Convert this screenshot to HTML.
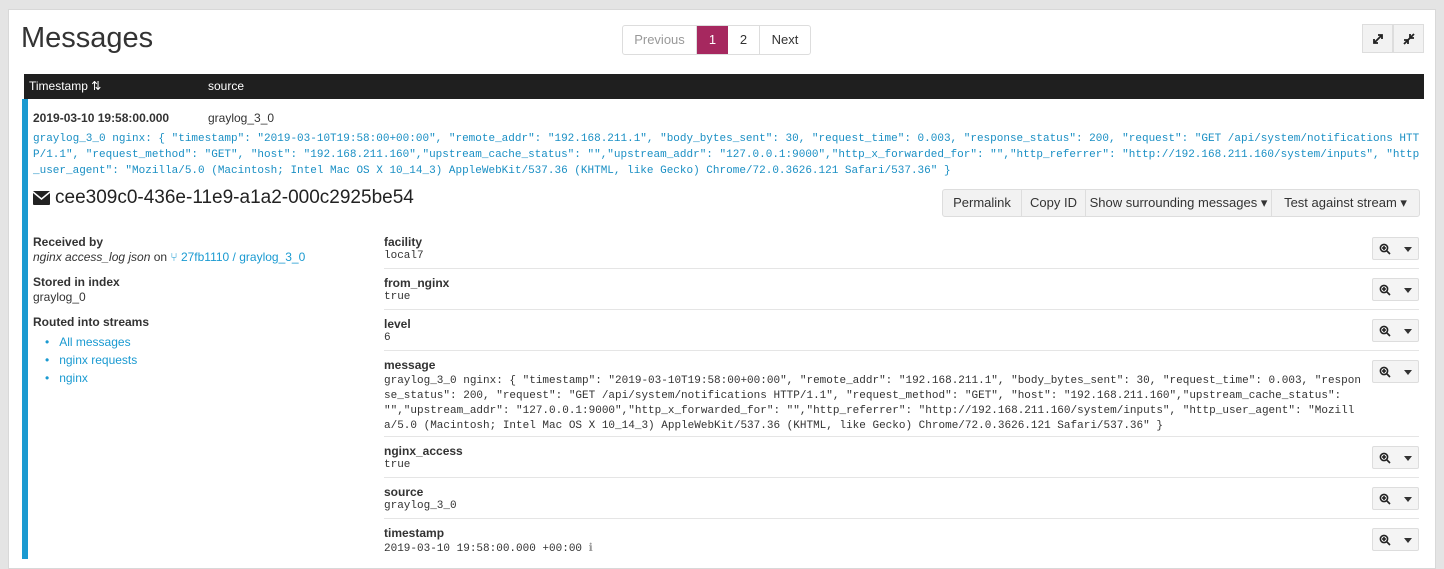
<!DOCTYPE html>
<html><head><meta charset="utf-8"><style>
*{box-sizing:border-box;margin:0;padding:0}
body{width:1444px;height:554px;overflow:hidden;background:#e4e4e4;font-family:"Liberation Sans",sans-serif;color:#333;position:relative}
.panel{position:absolute;left:8px;top:9px;width:1428px;height:560px;background:#fff;border:1px solid #d8d8d8}
.a{position:absolute}
.mono{font-family:"Liberation Mono",monospace;font-size:11px}
.btn{position:absolute;background:#f2f2f2;border:1px solid #ddd;font-size:13px;color:#333;text-align:center;line-height:27px}
.lbl{font-size:12px;font-weight:bold;color:#333}
.val{font-size:12px;color:#333}
.link{color:#1a9ad1}
.sep{position:absolute;left:384px;width:1035px;height:1px;background:#e5e5e5}
.fb{position:absolute;left:1372px;width:47px;height:23px;background:#f4f4f4;border:1px solid #ddd;border-radius:2px}
</style></head><body>
<div class="panel"></div>
<div class="a" style="left:21px;top:22px;font-size:29px;color:#333">Messages</div>
<div class="a" style="left:622px;top:25px;height:30px;width:189px;border:1px solid #ddd;border-radius:3px;display:flex;font-size:13px;line-height:28px">
<div style="width:74px;text-align:center;color:#999;border-right:1px solid #ddd">Previous</div>
<div style="width:31px;text-align:center;color:#fff;background:#a6285f">1</div>
<div style="width:32px;text-align:center;color:#333;border-right:1px solid #ddd">2</div>
<div style="flex:1;text-align:center;color:#333">Next</div></div>
<div class="btn" style="left:1362px;top:24px;width:31px;height:29px"><svg width="12" height="12" viewBox="0 0 12 12" style="margin-top:8px"><path d="M2 10L10 2M6 2h4v4M2 6v4h4" stroke="#222" stroke-width="1.8" fill="none"/></svg></div>
<div class="btn" style="left:1393px;top:24px;width:31px;height:29px"><svg width="12" height="12" viewBox="0 0 12 12" style="margin-top:8px"><path d="M1 11L11 1M7 1v4h4M1 7h4v4" stroke="#222" stroke-width="1.8" fill="none"/></svg></div>
<div class="a" style="left:24px;top:74px;width:1400px;height:25px;background:#1f1f1f;color:#fff;font-size:12px;line-height:25px">
<span style="position:absolute;left:5px">Timestamp <b style="font-weight:normal">⇅</b></span><span style="position:absolute;left:184px">source</span></div>
<div class="a" style="left:22px;top:99px;width:6px;height:460px;background:#1a9ad1"></div>
<div class="a" style="left:33px;top:111px;font-size:12px;font-weight:bold;color:#333">2019-03-10 19:58:00.000</div>
<div class="a" style="left:208px;top:111px;font-size:12px">graylog_3_0</div>
<div class="a mono link" style="left:33px;top:131px;width:1387px;line-height:16px;word-break:break-all;color:#1a8fc4">graylog_3_0 nginx: { "timestamp": "2019-03-10T19:58:00+00:00", "remote_addr": "192.168.211.1", "body_bytes_sent": 30, "request_time": 0.003, "response_status": 200, "request": "GET /api/system/notifications HTTP/1.1", "request_method": "GET", "host": "192.168.211.160","upstream_cache_status": "","upstream_addr": "127.0.0.1:9000","http_x_forwarded_for": "","http_referrer": "http://192.168.211.160/system/inputs", "http_user_agent": "Mozilla/5.0 (Macintosh; Intel Mac OS X 10_14_3) AppleWebKit/537.36 (KHTML, like Gecko) Chrome/72.0.3626.121 Safari/537.36" }</div>
<svg class="a" style="left:33px;top:191px" width="17" height="14" viewBox="0 0 17 14"><rect x="0" y="0" width="17" height="14" rx="1" fill="#222"/><path d="M0 1l8.5 7L17 1" stroke="#fff" stroke-width="1.5" fill="none"/></svg>
<div class="a" style="left:55px;top:187px;font-size:19px;color:#222">cee309c0-436e-11e9-a1a2-000c2925be54</div>
<div class="a" style="left:942px;top:189px;height:28px;width:478px;display:flex;background:#f2f2f2;border:1px solid #ddd;border-radius:3px;font-size:13px;line-height:26px">
<div style="width:79px;text-align:center;border-right:1px solid #ddd">Permalink</div>
<div style="width:64px;text-align:center;border-right:1px solid #ddd">Copy ID</div>
<div style="width:186px;text-align:center;border-right:1px solid #ddd">Show surrounding messages ▾</div>
<div style="flex:1;text-align:center">Test against stream ▾</div></div>
<div class="a lbl" style="left:33px;top:235px">Received by</div>
<div class="a val" style="left:33px;top:250px"><i>nginx access_log json</i> on <span class="link">⑂ 27fb1110 / graylog_3_0</span></div>
<div class="a lbl" style="left:33px;top:275px">Stored in index</div>
<div class="a val" style="left:33px;top:290px">graylog_0</div>
<div class="a lbl" style="left:33px;top:315px">Routed into streams</div>
<div class="a val link" style="left:45px;top:333px;line-height:18px">•&nbsp;&nbsp;&nbsp;All messages<br>•&nbsp;&nbsp;&nbsp;nginx requests<br>•&nbsp;&nbsp;&nbsp;nginx</div>
<div class="a lbl" style="left:384px;top:235px">facility</div><div class="a mono" style="left:384px;top:250px">local7</div><div class="sep" style="top:268px"></div>
<div class="a lbl" style="left:384px;top:276px">from_nginx</div><div class="a mono" style="left:384px;top:291px">true</div><div class="sep" style="top:309px"></div>
<div class="a lbl" style="left:384px;top:317px">level</div><div class="a mono" style="left:384px;top:332px">6</div><div class="sep" style="top:350px"></div>
<div class="a lbl" style="left:384px;top:358px">message</div>
<div class="a mono" style="left:384px;top:374px;width:980px;line-height:15px;word-break:break-all">graylog_3_0 nginx: { "timestamp": "2019-03-10T19:58:00+00:00", "remote_addr": "192.168.211.1", "body_bytes_sent": 30, "request_time": 0.003, "response_status": 200, "request": "GET /api/system/notifications HTTP/1.1", "request_method": "GET", "host": "192.168.211.160","upstream_cache_status": "","upstream_addr": "127.0.0.1:9000","http_x_forwarded_for": "","http_referrer": "http://192.168.211.160/system/inputs", "http_user_agent": "Mozilla/5.0 (Macintosh; Intel Mac OS X 10_14_3) AppleWebKit/537.36 (KHTML, like Gecko) Chrome/72.0.3626.121 Safari/537.36" }</div>
<div class="sep" style="top:436px"></div>
<div class="a lbl" style="left:384px;top:444px">nginx_access</div><div class="a mono" style="left:384px;top:459px">true</div><div class="sep" style="top:477px"></div>
<div class="a lbl" style="left:384px;top:485px">source</div><div class="a mono" style="left:384px;top:500px">graylog_3_0</div><div class="sep" style="top:518px"></div>
<div class="a lbl" style="left:384px;top:526px">timestamp</div><div class="a mono" style="left:384px;top:541px">2019-03-10 19:58:00.000 +00:00 <span style="color:#999">ℹ</span></div>
<div id="fbs"></div>
<script>
[237,278,319,360,446,487,528].forEach(function(t){document.getElementById('fbs').insertAdjacentHTML('beforeend','<div class="fb" style="top:'+t+'px"><svg style="position:absolute;left:6px;top:5px" width="12" height="12" viewBox="0 0 12 12"><circle cx="5" cy="5" r="3.6" stroke="#222" stroke-width="1.6" fill="none"/><path d="M7.5 7.5L11 11M5 3v4M3 5h4" stroke="#222" stroke-width="1.6"/></svg><svg style="position:absolute;left:31px;top:9px" width="8" height="5"><path d="M0 0h8L4 5z" fill="#333"/></svg></div>')});
</script>
</body></html>
